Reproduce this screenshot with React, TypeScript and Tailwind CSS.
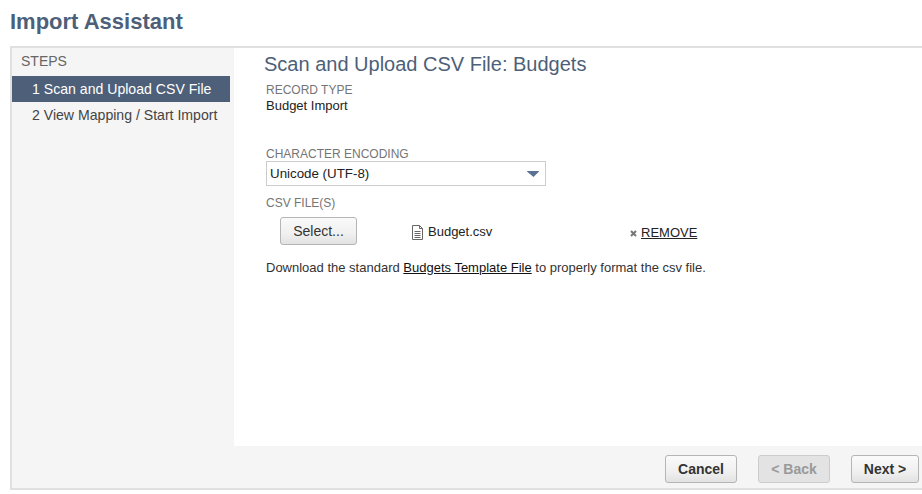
import React from 'react';

const btn =
  'h-[28px] rounded-[3px] border border-[#b5b5b5] bg-[linear-gradient(#fafafa_0%,#f0f0f0_60%,#e2e2e2_100%)] text-[14px] text-[#333]';

export default function App() {
  return (
    <div className="h-[494px] w-[922px] overflow-hidden bg-white font-['Liberation_Sans',Arial,sans-serif]">
      <h1 className="h-[46px] pl-[10px] pt-[8px] text-[22px] leading-[28px] font-bold text-[#4d5f79]">Import Assistant</h1>
      <div className="ml-[10px] flex h-[444px] flex-col border-y-2 border-l-2 border-[#e0e0e0]">
        <div className="flex min-h-0 flex-1">
          <aside className="w-[222px] bg-[#f5f5f5]">
            <div className="h-[28px] pl-[9px] pt-[5px] text-[14px] leading-[17px] text-[#666]">STEPS</div>
            <div className="mr-[4px] h-[26px] bg-[#4d5f79] pl-[20px] text-[14.1px] leading-[26px] text-white">1 Scan and Upload CSV File</div>
            <div className="h-[26px] pl-[20px] text-[14.1px] leading-[26px] text-[#444]">2 View Mapping / Start Import</div>
          </aside>
          <main className="flex-1 bg-white pl-[30px]">
            <h2 className="pt-[4px] text-[20px] leading-[24px] text-[#4d5f79]">Scan and Upload CSV File: Budgets</h2>
            <div className="pl-[2px]">
              <div className="mt-[7px] text-[12px] leading-[14px] text-[#757575]">RECORD TYPE</div>
              <div className="pt-[1px] text-[13px] leading-[15px] text-[#222]">Budget Import</div>
              <div className="mt-[34px] text-[12px] leading-[14px] text-[#757575]">CHARACTER ENCODING</div>
              <div className="flex h-[25px] w-[280px] items-center justify-between border border-[#ccc] pl-[3px] pr-[6px] text-[13.33px] text-[#222]">
                <span>Unicode (UTF-8)</span>
                <svg width="12" height="6" viewBox="0 0 12 6">
                  <path d="M0.5 0h11a.5.5 0 0 1 .3.8L6.5 6 .2.8A.5.5 0 0 1 .5 0z" fill="#5b7294" />
                </svg>
              </div>
              <div className="mt-[10px] text-[12px] leading-[14px] text-[#757575]">CSV FILE(S)</div>
              <div className="mt-[7px] flex h-[28px] items-center text-[13px] text-[#222]">
                <button className={`${btn} ml-[14px] w-[77px]`}>Select...</button>
                <svg width="13" height="15" viewBox="0 0 13 15" className="ml-[54px] mt-[2px]" fill="none" stroke="#666" strokeWidth="1">
                  <path d="M1.5.5h7l3 3v11h-10zM8.5.5v3h3M3.5 6.5h6M3.5 8.5h6M3.5 10.5h6M3.5 12.5h6" />
                </svg>
                <span className="ml-[4px] mt-[2px] w-[202px]">Budget.csv</span>
                <svg width="7" height="7" viewBox="0 0 7 7" className="mt-[5px]">
                  <path d="M1 1l5 5M6 1L1 6" stroke="#777" strokeWidth="2" />
                </svg>
                <a className="ml-[4px] mt-[4px] underline text-[#222]" href="#">REMOVE</a>
              </div>
              <p className="mt-[16px] text-[13px] leading-[14px] text-[#333]">
                Download the standard <a className="underline text-[#111]" href="#">Budgets Template File</a> to properly format the csv file.
              </p>
            </div>
          </main>
        </div>
        <footer className="flex h-[42px] shrink-0 items-center justify-end bg-[#f5f5f5] pr-[3px] pt-[4px] text-[14px] font-bold">
          <button className={`${btn} w-[72px] font-bold`}>Cancel</button>
          <button className="ml-[21px] h-[28px] w-[72px] rounded-[3px] border border-[#ccc] bg-[#e3e3e3] text-[14px] font-bold text-[#999]">&lt; Back</button>
          <button className={`${btn} ml-[21px] w-[68px] font-bold`}>Next &gt;</button>
        </footer>
      </div>
    </div>
  );
}
